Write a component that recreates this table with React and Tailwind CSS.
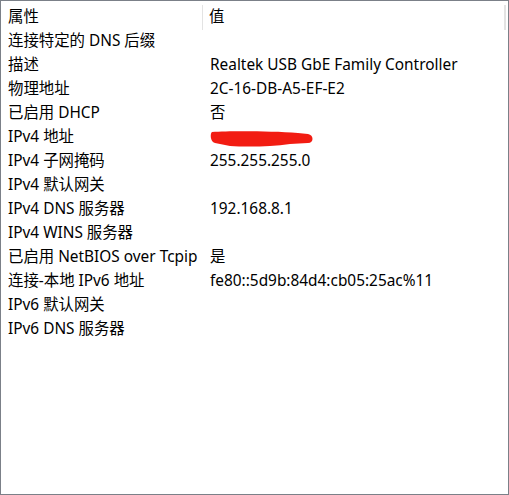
import React from "react";

const rows = [
  ["连接特定的 DNS 后缀", ""],
  ["描述", "Realtek USB GbE Family Controller"],
  ["物理地址", "2C-16-DB-A5-EF-E2"],
  ["已启用 DHCP", "否"],
  ["IPv4 地址", "__redacted__"],
  ["IPv4 子网掩码", "255.255.255.0"],
  ["IPv4 默认网关", ""],
  ["IPv4 DNS 服务器", "192.168.8.1"],
  ["IPv4 WINS 服务器", ""],
  ["已启用 NetBIOS over Tcpip", "是"],
  ["连接-本地 IPv6 地址", "fe80::5d9b:84d4:cb05:25ac%11"],
  ["IPv6 默认网关", ""],
  ["IPv6 DNS 服务器", ""],
];

const Redacted = () => (
  <svg width="104" height="18" viewBox="0 0 104 18" className="block mt-[3px]">
    <path
      d="M2 2 C20 1, 60 1, 88 3 L98 4 C104 5, 104 13, 98 13 L80 14 C60 17, 35 17, 20 16 L5 13 C0 12, 0 3, 2 2 Z"
      fill="#f21c12"
    />
  </svg>
);

export default function App() {
  return (
    <div
      className="w-[509px] h-[495px] border border-[#7b8088] bg-white text-[15.4px] text-black pt-[4px]"
      style={{ fontFamily: '"Noto Sans", "Noto Sans CJK SC", sans-serif' }}
    >
      <div className="flex h-6 items-center">
        <div className="w-[202px] h-[25px] pl-[7px] flex items-center border-r border-[#e3e3e3]">属性</div>
        <div className="w-[303px] h-[25px] pl-[6px] flex items-center border-r-2 border-[#e3e3e3]">值</div>
      </div>
      {rows.map(([k, v]) => (
        <div key={k} className="flex h-6 items-center leading-none">
          <div className="w-[203px] pl-[7px] whitespace-nowrap">{k}</div>
          <div className="pl-[6px] whitespace-nowrap">
            {v === "__redacted__" ? <Redacted /> : v}
          </div>
        </div>
      ))}
    </div>
  );
}
